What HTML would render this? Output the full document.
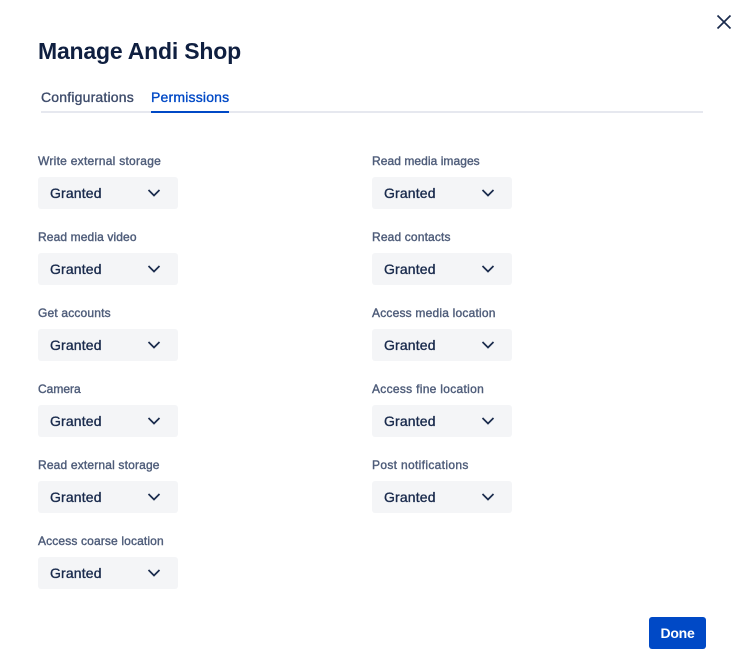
<!DOCTYPE html>
<html><head><meta charset="utf-8"><style>
html,body{margin:0;padding:0;background:#fff}
body{width:749px;height:671px;position:relative;overflow:hidden;font-family:"Liberation Sans",sans-serif}
.a{position:absolute;white-space:nowrap}
.title{left:38px;top:37px;font-size:23px;line-height:28px;font-weight:700;letter-spacing:-.2px;color:#0f1f40}
.tab{top:88px;font-size:14px;line-height:18px;font-weight:400;letter-spacing:.19px;-webkit-text-stroke:.35px currentColor}
.line{left:41px;top:111px;width:662px;height:2px;background:#e6e8ef}
.act{left:151px;top:111px;width:78px;height:2px;background:#0049c6}
.lab{font-size:12px;line-height:16px;color:#4f5d7a;-webkit-text-stroke:.4px currentColor}
.sel{width:140px;height:32px;background:#f4f5f7;border-radius:3px}
.sel span{position:absolute;left:12px;top:7px;font-size:14px;line-height:18px;letter-spacing:.15px;color:#1a2b4d;-webkit-text-stroke:.35px currentColor}
.sel svg{position:absolute;left:108px;top:8px}
.done{left:649px;top:617px;width:57px;height:32px;background:#0049c6;border-radius:3px;color:#fff;font-size:14px;font-weight:700;letter-spacing:-.25px;line-height:32px;text-align:center}
</style></head><body>
<div class="a title">Manage Andi Shop</div>
<svg class="a" style="left:716px;top:14px" width="16" height="16" viewBox="0 0 16 16"><path d="M1.5 1.5L14.5 14.5M14.5 1.5L1.5 14.5" stroke="#1a2b4d" stroke-width="1.7" fill="none"/></svg>
<div class="a tab" style="left:41px;color:#3e4c6b">Configurations</div>
<div class="a tab" style="left:151px;color:#0049c6">Permissions</div>
<div class="a line"></div><div class="a act"></div>

<div class="a lab" style="left:38px;top:153px;letter-spacing:.27px">Write external storage</div>
<div class="a sel" style="left:38px;top:177px"><span>Granted</span><svg width="16" height="16" viewBox="0 0 16 16"><path d="M2.5 5L8 10.5L13.5 5" stroke="#1a2b4d" stroke-width="1.7" fill="none"/></svg></div>
<div class="a lab" style="left:38px;top:229px;letter-spacing:.12px">Read media video</div>
<div class="a sel" style="left:38px;top:253px"><span>Granted</span><svg width="16" height="16" viewBox="0 0 16 16"><path d="M2.5 5L8 10.5L13.5 5" stroke="#1a2b4d" stroke-width="1.7" fill="none"/></svg></div>
<div class="a lab" style="left:38px;top:305px;letter-spacing:.17px">Get accounts</div>
<div class="a sel" style="left:38px;top:329px"><span>Granted</span><svg width="16" height="16" viewBox="0 0 16 16"><path d="M2.5 5L8 10.5L13.5 5" stroke="#1a2b4d" stroke-width="1.7" fill="none"/></svg></div>
<div class="a lab" style="left:38px;top:381px">Camera</div>
<div class="a sel" style="left:38px;top:405px"><span>Granted</span><svg width="16" height="16" viewBox="0 0 16 16"><path d="M2.5 5L8 10.5L13.5 5" stroke="#1a2b4d" stroke-width="1.7" fill="none"/></svg></div>
<div class="a lab" style="left:38px;top:457px;letter-spacing:.17px">Read external storage</div>
<div class="a sel" style="left:38px;top:481px"><span>Granted</span><svg width="16" height="16" viewBox="0 0 16 16"><path d="M2.5 5L8 10.5L13.5 5" stroke="#1a2b4d" stroke-width="1.7" fill="none"/></svg></div>
<div class="a lab" style="left:38px;top:533px;letter-spacing:.14px">Access coarse location</div>
<div class="a sel" style="left:38px;top:557px"><span>Granted</span><svg width="16" height="16" viewBox="0 0 16 16"><path d="M2.5 5L8 10.5L13.5 5" stroke="#1a2b4d" stroke-width="1.7" fill="none"/></svg></div>

<div class="a lab" style="left:372px;top:153px;letter-spacing:.06px">Read media images</div>
<div class="a sel" style="left:372px;top:177px"><span>Granted</span><svg width="16" height="16" viewBox="0 0 16 16"><path d="M2.5 5L8 10.5L13.5 5" stroke="#1a2b4d" stroke-width="1.7" fill="none"/></svg></div>
<div class="a lab" style="left:372px;top:229px;letter-spacing:.15px">Read contacts</div>
<div class="a sel" style="left:372px;top:253px"><span>Granted</span><svg width="16" height="16" viewBox="0 0 16 16"><path d="M2.5 5L8 10.5L13.5 5" stroke="#1a2b4d" stroke-width="1.7" fill="none"/></svg></div>
<div class="a lab" style="left:372px;top:305px;letter-spacing:.2px">Access media location</div>
<div class="a sel" style="left:372px;top:329px"><span>Granted</span><svg width="16" height="16" viewBox="0 0 16 16"><path d="M2.5 5L8 10.5L13.5 5" stroke="#1a2b4d" stroke-width="1.7" fill="none"/></svg></div>
<div class="a lab" style="left:372px;top:381px;letter-spacing:.3px">Access fine location</div>
<div class="a sel" style="left:372px;top:405px"><span>Granted</span><svg width="16" height="16" viewBox="0 0 16 16"><path d="M2.5 5L8 10.5L13.5 5" stroke="#1a2b4d" stroke-width="1.7" fill="none"/></svg></div>
<div class="a lab" style="left:372px;top:457px;letter-spacing:.33px">Post notifications</div>
<div class="a sel" style="left:372px;top:481px"><span>Granted</span><svg width="16" height="16" viewBox="0 0 16 16"><path d="M2.5 5L8 10.5L13.5 5" stroke="#1a2b4d" stroke-width="1.7" fill="none"/></svg></div>

<div class="a done">Done</div>
</body></html>
